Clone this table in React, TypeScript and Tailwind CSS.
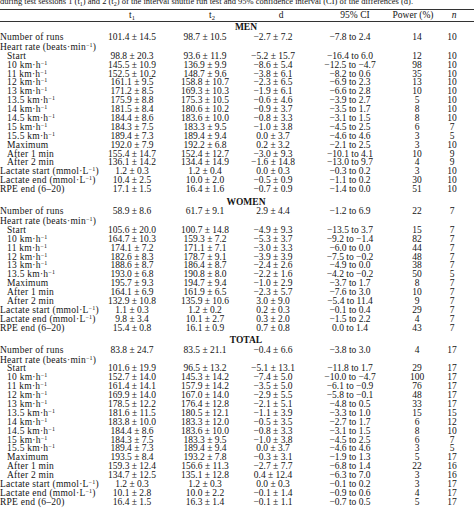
type Row = {
  label: React.ReactNode
  sub?: boolean
  gap?: boolean
  values?: [string, string, string, string, string, string]
}

type Section = { title: string; rows: Row[] }

const Sup = ({ children }: { children: React.ReactNode }) => <sup className="text-[6px] -top-[3px]">{children}</sup>

const kmh = (v: string) => (
  <>
    {v} km·h<Sup>−1</Sup>
  </>
)

const hr: Row = {
  label: (
    <>
      Heart rate (beats·min<Sup>−1</Sup>)
    </>
  ),
  gap: true,
}
const lacStart = (
  <>
    Lactate start (mmol·L<Sup>−1</Sup>)
  </>
)
const lacEnd = (
  <>
    Lactate end (mmol·L<Sup>−1</Sup>)
  </>
)

const sections: Section[] = [
  {
    title: 'MEN',
    rows: [
      { label: 'Number of runs', values: ['101.4 ± 14.5', '98.7 ± 10.5', '−2.7 ± 7.2', '−7.8 to 2.4', '14', '10'] },
      hr,
      { label: 'Start', sub: true, values: ['98.8 ± 20.3', '93.6 ± 11.9', '−5.2 ± 15.7', '−16.4 to 6.0', '12', '10'] },
      { label: kmh('10'), sub: true, values: ['145.5 ± 10.9', '136.9 ± 9.9', '−8.6 ± 5.4', '−12.5 to −4.7', '98', '10'] },
      { label: kmh('11'), sub: true, values: ['152.5 ± 10.2', '148.7 ± 9.6', '−3.8 ± 6.1', '−8.2 to 0.6', '35', '10'] },
      { label: kmh('12'), sub: true, values: ['161.1 ± 9.5', '158.8 ± 10.7', '−2.3 ± 6.5', '−6.9 to 2.3', '13', '10'] },
      { label: kmh('13'), sub: true, values: ['171.2 ± 8.5', '169.3 ± 10.3', '−1.9 ± 6.1', '−6.6 to 2.8', '10', '10'] },
      { label: kmh('13.5'), sub: true, values: ['175.9 ± 8.8', '175.3 ± 10.5', '−0.6 ± 4.6', '−3.9 to 2.7', '5', '10'] },
      { label: kmh('14'), sub: true, values: ['181.5 ± 8.4', '180.6 ± 10.2', '−0.9 ± 3.7', '−3.5 to 1.7', '8', '10'] },
      { label: kmh('14.5'), sub: true, values: ['184.4 ± 8.6', '183.6 ± 10.0', '−0.8 ± 3.3', '−3.1 to 1.5', '8', '10'] },
      { label: kmh('15'), sub: true, values: ['184.3 ± 7.5', '183.3 ± 9.5', '−1.0 ± 3.8', '−4.5 to 2.5', '6', '7'] },
      { label: kmh('15.5'), sub: true, values: ['189.4 ± 7.3', '189.4 ± 9.4', '0.0 ± 3.7', '−4.6 to 4.6', '3', '5'] },
      { label: 'Maximum', sub: true, values: ['192.0 ± 7.9', '192.2 ± 6.8', '0.2 ± 3.2', '−2.1 to 2.5', '3', '10'] },
      { label: 'After 1 min', sub: true, values: ['155.4 ± 14.7', '152.4 ± 12.7', '−3.0 ± 9.3', '−10.1 to 4.1', '10', '9'] },
      { label: 'After 2 min', sub: true, values: ['136.1 ± 14.2', '134.4 ± 14.9', '−1.6 ± 14.8', '−13.0 to 9.7', '4', '9'] },
      { label: lacStart, values: ['1.2 ± 0.3', '1.2 ± 0.4', '0.0 ± 0.3', '−0.3 to 0.2', '3', '10'] },
      { label: lacEnd, values: ['10.4 ± 2.5', '10.0 ± 2.0', '−0.5 ± 0.9', '−1.1 to 0.2', '30', '10'] },
      { label: 'RPE end (6–20)', values: ['17.1 ± 1.5', '16.4 ± 1.6', '−0.7 ± 0.9', '−1.4 to 0.0', '51', '10'] },
    ],
  },
  {
    title: 'WOMEN',
    rows: [
      { label: 'Number of runs', values: ['58.9 ± 8.6', '61.7 ± 9.1', '2.9 ± 4.4', '−1.2 to 6.9', '22', '7'] },
      hr,
      { label: 'Start', sub: true, values: ['105.6 ± 20.0', '100.7 ± 14.8', '−4.9 ± 9.3', '−13.5 to 3.7', '15', '7'] },
      { label: kmh('10'), sub: true, values: ['164.7 ± 10.3', '159.3 ± 7.2', '−5.3 ± 3.7', '−9.2 to −1.4', '82', '7'] },
      { label: kmh('11'), sub: true, values: ['174.1 ± 7.2', '171.1 ± 7.1', '−3.0 ± 3.3', '−6.0 to 0.0', '44', '7'] },
      { label: kmh('12'), sub: true, values: ['182.6 ± 8.3', '178.7 ± 9.1', '−3.9 ± 3.9', '−7.5 to −0.2', '48', '7'] },
      { label: kmh('13'), sub: true, values: ['188.6 ± 8.7', '186.4 ± 8.7', '−2.4 ± 2.6', '−4.9 to 0.0', '38', '7'] },
      { label: kmh('13.5'), sub: true, values: ['193.0 ± 6.8', '190.8 ± 8.0', '−2.2 ± 1.6', '−4.2 to −0.2', '50', '5'] },
      { label: 'Maximum', sub: true, values: ['195.7 ± 9.3', '194.7 ± 9.4', '−1.0 ± 2.9', '−3.7 to 1.7', '8', '7'] },
      { label: 'After 1 min', sub: true, values: ['164.1 ± 6.9', '161.9 ± 6.5', '−2.3 ± 5.7', '−7.6 to 3.0', '10', '7'] },
      { label: 'After 2 min', sub: true, values: ['132.9 ± 10.8', '135.9 ± 10.6', '3.0 ± 9.0', '−5.4 to 11.4', '9', '7'] },
      { label: lacStart, values: ['1.1 ± 0.3', '1.2 ± 0.2', '0.2 ± 0.3', '−0.1 to 0.4', '29', '7'] },
      { label: lacEnd, values: ['9.8 ± 3.4', '10.1 ± 2.7', '0.3 ± 2.0', '−1.5 to 2.2', '4', '7'] },
      { label: 'RPE end (6–20)', values: ['15.4 ± 0.8', '16.1 ± 0.9', '0.7 ± 0.8', '0.0 to 1.4', '43', '7'] },
    ],
  },
  {
    title: 'TOTAL',
    rows: [
      { label: 'Number of runs', values: ['83.8 ± 24.7', '83.5 ± 21.1', '−0.4 ± 6.6', '−3.8 to 3.0', '4', '17'] },
      hr,
      { label: 'Start', sub: true, values: ['101.6 ± 19.9', '96.5 ± 13.2', '−5.1 ± 13.1', '−11.8 to 1.7', '29', '17'] },
      { label: kmh('10'), sub: true, values: ['152.7 ± 14.0', '145.3 ± 14.2', '−7.4 ± 5.0', '−10.0 to −4.7', '100', '17'] },
      { label: kmh('11'), sub: true, values: ['161.4 ± 14.1', '157.9 ± 14.2', '−3.5 ± 5.0', '−6.1 to −0.9', '76', '17'] },
      { label: kmh('12'), sub: true, values: ['169.9 ± 14.0', '167.0 ± 14.0', '−2.9 ± 5.5', '−5.8 to −0.1', '48', '17'] },
      { label: kmh('13'), sub: true, values: ['178.5 ± 12.2', '176.4 ± 12.8', '−2.1 ± 5.1', '−4.8 to 0.5', '33', '17'] },
      { label: kmh('13.5'), sub: true, values: ['181.6 ± 11.5', '180.5 ± 12.1', '−1.1 ± 3.9', '−3.3 to 1.0', '15', '15'] },
      { label: kmh('14'), sub: true, values: ['183.8 ± 10.0', '183.3 ± 12.0', '−0.5 ± 3.5', '−2.7 to 1.7', '6', '12'] },
      { label: kmh('14.5'), sub: true, values: ['184.4 ± 8.6', '183.6 ± 10.0', '−0.8 ± 3.3', '−3.1 to 1.5', '8', '10'] },
      { label: kmh('15'), sub: true, values: ['184.3 ± 7.5', '183.3 ± 9.5', '−1.0 ± 3.8', '−4.5 to 2.5', '6', '7'] },
      { label: kmh('15.5'), sub: true, values: ['189.4 ± 7.3', '189.4 ± 9.4', '0.0 ± 3.7', '−4.6 to 4.6', '3', '5'] },
      { label: 'Maximum', sub: true, values: ['193.5 ± 8.4', '193.2 ± 7.8', '−0.3 ± 3.1', '−1.9 to 1.3', '5', '17'] },
      { label: 'After 1 min', sub: true, values: ['159.3 ± 12.4', '156.6 ± 11.3', '−2.7 ± 7.7', '−6.8 to 1.4', '22', '16'] },
      { label: 'After 2 min', sub: true, values: ['134.7 ± 12.5', '135.1 ± 12.8', '0.4 ± 12.4', '−6.3 to 7.0', '3', '16'] },
      { label: lacStart, values: ['1.2 ± 0.3', '1.2 ± 0.3', '0.0 ± 0.3', '−0.1 to 0.2', '3', '17'] },
      { label: lacEnd, values: ['10.1 ± 2.8', '10.0 ± 2.2', '−0.1 ± 1.4', '−0.9 to 0.6', '4', '17'] },
      { label: 'RPE end (6–20)', values: ['16.4 ± 1.5', '16.3 ± 1.4', '−0.1 ± 1.1', '−0.7 to 0.5', '5', '17'] },
    ],
  },
]

const cols = 'grid grid-cols-[100px_64px_82px_54px_100px_34px_36px]'

const DataRow = ({ row }: { row: Row }) => (
  <div className={`${cols} h-[8.9px] leading-[8.9px] whitespace-nowrap ${row.gap ? 'mt-[1px]' : ''}`}>
    <div className={`tracking-[0.25px] ${row.sub ? 'pl-[7px]' : ''}`}>{row.label}</div>
    {row.values?.map((v, i) => (
      <div key={i} className="text-center">
        {v}
      </div>
    ))}
  </div>
)

export default function App() {
  return (
    <div className="w-[474px] h-[509px] overflow-hidden bg-white text-[#141414] font-['Liberation_Serif',serif] text-[9.5px]">
      <div className="h-[9px] overflow-hidden">
        <div className="-mt-[3px] leading-[9px] text-[8.5px] whitespace-nowrap">
          during test sessions 1 (t<sub className="text-[6px]">1</sub>) and 2 (t<sub className="text-[6px]">2</sub>) of the interval shuttle
          run test and 95% confidence interval (CI) of the differences (d).
        </div>
      </div>
      <div className="border-t border-b border-[#333] h-[13px] leading-[11px] whitespace-nowrap">
        <div className={cols}>
          <div />
          <div className="text-center">
            t<sub className="text-[6.5px]">1</sub>
          </div>
          <div className="text-center pl-[14px]">
            t<sub className="text-[6.5px]">2</sub>
          </div>
          <div className="text-center pl-[16px]">d</div>
          <div className="text-center pl-[10px]">95% CI</div>
          <div className="flex justify-center pr-[8px]">Power (%)</div>
          <div className="text-center pl-[4px] italic">n</div>
        </div>
      </div>
      {sections.map((s, si) => (
        <div key={s.title}>
          <div
            className={`${si === 0 ? 'h-[11px] pt-[0.5px]' : 'h-[13.1px] pt-[3.6px]'} leading-[8.9px] text-center font-bold pl-[18px]`}
          >
            {s.title}
          </div>
          {s.rows.map((r, ri) => (
            <DataRow key={ri} row={r} />
          ))}
        </div>
      ))}
    </div>
  )
}
